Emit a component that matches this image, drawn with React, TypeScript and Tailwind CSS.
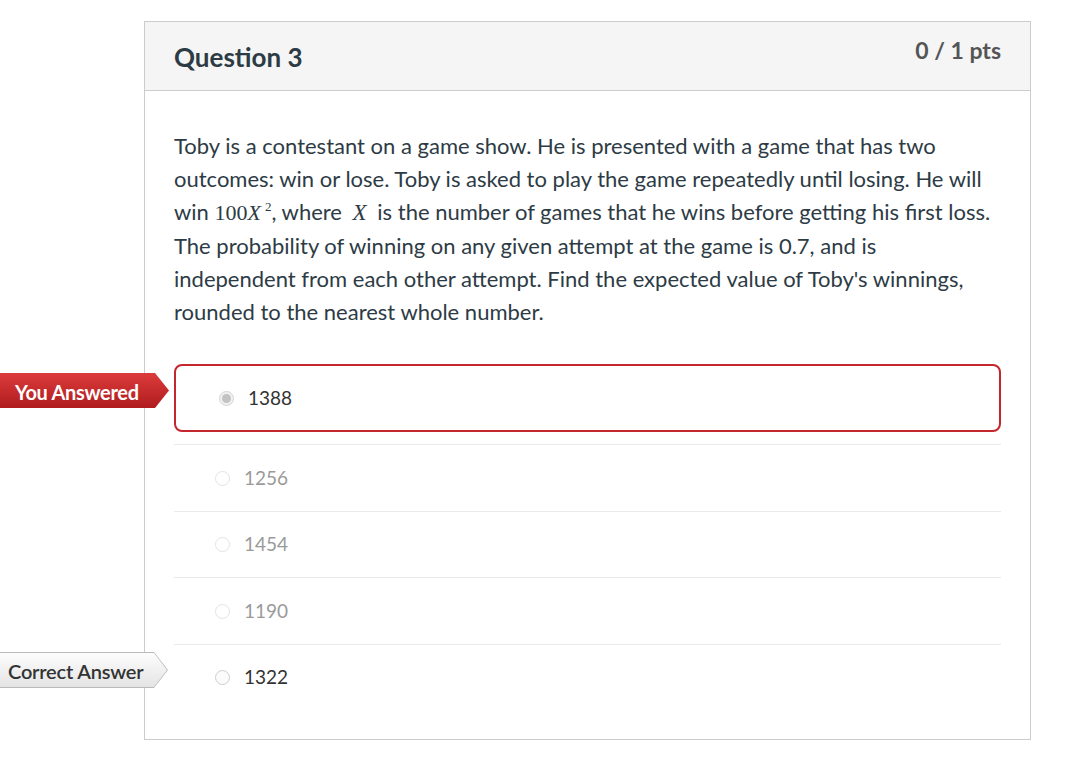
import React from "react";

const font = { fontFamily: "Lato, 'Open Sans', sans-serif" };

function YouAnsweredTag() {
  return (
    <div
      className="absolute right-[calc(100%+7px)] top-[7px] h-[35px] w-[169px] bg-gradient-to-b from-[#dc3b3b] to-[#b01b1e] [clip-path:polygon(0_0,155px_0,100%_50%,155px_100%,0_100%)]"
    >
      <span className="absolute left-[15px] top-[4px] text-[20px] font-bold tracking-[-0.3px] text-white">
        You Answered
      </span>
    </div>
  );
}

function CorrectTag() {
  return (
    <div className="absolute right-[calc(100%+6px)] top-[7px] h-[36px] w-[169px] bg-[#b9b9b9] [clip-path:polygon(0_0,155px_0,100%_50%,155px_100%,0_100%)]">
      <div className="absolute inset-[1px] bg-gradient-to-b from-[#fdfdfd] to-[#e4e4e4] [clip-path:polygon(0_0,154px_0,100%_50%,154px_100%,0_100%)]" />
      <span className="absolute left-[9px] top-[4px] text-[20px] font-semibold tracking-[-0.2px] text-[#333]">
        Correct Answer
      </span>
    </div>
  );
}

function Radio({ selected, dark }: { selected?: boolean; dark?: boolean }) {
  if (selected) {
    return (
      <span className="flex h-[15px] w-[15px] items-center justify-center rounded-full border border-[#d4d4d4] bg-[#f2f2f2]">
        <span className="h-[9px] w-[9px] rounded-full bg-[#c3c3c3]" />
      </span>
    );
  }
  return (
    <span
      className={
        dark
          ? "h-[15px] w-[15px] rounded-full border border-[#cfcfcf] bg-[#fbfbfb]"
          : "h-[15px] w-[15px] rounded-full border border-[#e3e3e3] bg-white"
      }
    />
  );
}

const others = [
  { value: "1256", h: "h-[67px]" },
  { value: "1454", h: "h-[66px]" },
  { value: "1190", h: "h-[67px]" },
];

export default function App() {
  return (
    <div className="min-h-[762px] bg-white pl-[144px] pt-[21px] text-[#2d3b45]" style={font}>
      <div className="w-[887px] border border-[#c9cdd0]">
        <div className="flex h-[69px] items-start justify-between border-b border-[#c9cdd0] bg-[#f5f5f5] pl-[29px] pr-[29px]">
          <h2 className="mt-[17px] text-[26px] font-bold leading-[36px]">Question 3</h2>
          <span className="mt-[12px] text-[23px] font-bold leading-[32px] text-[#555]">0 / 1 pts</span>
        </div>

        <div className="pb-[29px] pl-[29px] pr-[29px] pt-[38px]">
          <p className="text-[22px] leading-[33px]">
            Toby is a contestant on a game show. He is presented with a game that has two outcomes: win or lose.
            Toby is asked to play the game repeatedly until losing. He will win{" "}
            <span className="font-['Liberation_Serif',serif] text-[22px]">
              100<i>X</i>
              <span className="relative -top-[9px] ml-[4px] text-[13px] leading-none">2</span>
            </span>
            , where{" "}
            <i className="mx-[5px] font-['Liberation_Serif',serif] text-[23px]">X</i> is the number of games that he
            wins before getting his first loss. The probability of winning on any given attempt at the game is 0.7,
            and is independent from each other attempt. Find the expected value of Toby's winnings, rounded to the
            nearest whole number.
          </p>

          <div className="mt-[36px]">
            <div className="relative flex h-[68px] items-center rounded-[8px] border-2 border-[#c4262e] pl-[43px]">
              <YouAnsweredTag />
              <Radio selected />
              <span className="ml-[14px] text-[19px] text-[#333]">1388</span>
            </div>
            <div className="h-[12px]" />
            {others.map((o) => (
              <div key={o.value} className={`flex items-center border-t border-[#e8eaec] pl-[41px] ${o.h}`}>
                <Radio />
                <span className="ml-[14px] text-[19px] text-[#9a9a9a]">{o.value}</span>
              </div>
            ))}
            <div className="relative flex h-[66px] items-center border-t border-[#e8eaec] pl-[41px]">
              <CorrectTag />
              <Radio dark />
              <span className="ml-[14px] text-[19px] text-[#333]">1322</span>
            </div>
          </div>
        </div>
      </div>
    </div>
  );
}
